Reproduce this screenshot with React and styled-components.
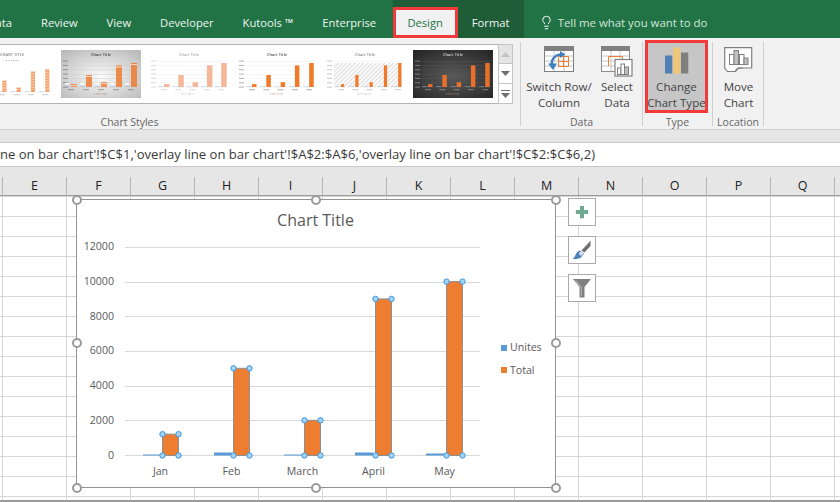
import React from "react";
import styled, { createGlobalStyle } from "styled-components";
import { Lightbulb } from "lucide-react";

const Global = createGlobalStyle`
  html, body { margin: 0; padding: 0; background: #fff; }
  body { font-family: "Open Sans", "Liberation Sans", sans-serif; }
`;

const FONT = `"Open Sans", "Liberation Sans", sans-serif`;

const Window = styled.div`
  width: 840px;
  height: 502px;
  display: flex;
  flex-direction: column;
  overflow: hidden;
  font-family: ${FONT};
`;

const TabBar = styled.div`
  height: 38px;
  flex: none;
  display: flex;
  background: #217346;
  color: #fff;
`;
const Tab = styled.div`
  padding: 7px 14.5px 0;
  display: flex;
  align-items: center;
  font-size: 11.2px;
  white-space: nowrap;
  color: #eef5f0;
  margin-left: ${(p) => p.$shift || 0}px;
`;
const ContextGroup = styled.div`
  margin-left: 2px;
  display: flex;
  padding-top: 7px;
  background: #1e5d38;
  width: 131px;
  flex: none;
  box-sizing: border-box;
`;
const ActiveTab = styled.div`
  width: 65px;
  box-sizing: border-box;
  border: 3px solid #f33a3a;
  background: #f1f1f1;
  color: #217346;
  font-size: 11.2px;
  display: flex;
  align-items: center;
  justify-content: center;
`;
const ContextTab = styled.div`
  flex: 1;
  display: flex;
  align-items: center;
  justify-content: center;
  font-size: 11.2px;
  color: #f2f7f4;
`;
const TellMe = styled.div`
  margin-left: 15px;
  padding-top: 7px;
  display: flex;
  align-items: center;
  gap: 4px;
  font-size: 11.4px;
  color: #d3e6da;
  white-space: nowrap;
`;

const Ribbon = styled.div`
  height: 92px;
  flex: none;
  box-sizing: border-box;
  display: flex;
  background: #f1f1f1;
  border-bottom: 1px solid #d2d2d2;
`;
const Group = styled.div`
  width: ${(p) => p.$w}px;
  flex: none;
  box-sizing: border-box;
  height: 84px;
  margin-top: 4px;
  border-right: 1px solid #cfcfcf;
  display: flex;
  flex-direction: column;
  position: relative;
`;
const GroupBody = styled.div`
  height: 70px;
  flex: none;
  display: flex;
  padding-left: ${(p) => p.$pad || 0}px;
`;
const GroupLabel = styled.div`
  font-size: 10.5px;
  line-height: 14px;
  height: 14px;
  margin-top: 3px;
  text-align: center;
  color: #666;
  padding-right: ${(p) => p.$pr || 0}px;
`;
const Gallery = styled.div`
  display: flex;
  height: 60px;
  margin-top: 2px;
  width: 512px;
`;
const GalleryPane = styled.div`
  width: 498px;
  box-sizing: border-box;
  flex: none;
  background: #fff;
  border-top: 1px solid #b4b4b4;
  border-bottom: 1px solid #b4b4b4;
  overflow: hidden;
  display: flex;
  align-items: center;
  gap: 8px;
`;
const ThumbSvg = styled.svg`
  width: 80px;
  height: 48px;
  flex: none;
  margin-left: ${(p) => p.$shift || 0}px;
  filter: blur(0.35px);
`;
const ScrollCol = styled.div`
  width: 15px;
  flex: none;
  display: flex;
  flex-direction: column;
`;
const ScrollBtn = styled.div`
  height: 20px;
  box-sizing: border-box;
  border: 1px solid #c4c4c4;
  border-top-width: ${(p) => (p.$first ? 1 : 0)}px;
  background: ${(p) => (p.$off ? "#e4e4e4" : "#fff")};
  display: flex;
  align-items: center;
  justify-content: center;
`;
const BigButton = styled.div`
  width: ${(p) => p.$w}px;
  flex: none;
  display: flex;
  flex-direction: column;
  align-items: center;
  font-size: 11.6px;
  line-height: 16px;
  color: #444;
  text-align: center;
  white-space: nowrap;
  box-sizing: border-box;
`;
const IconSlot = styled.div`
  flex: none;
  height: ${(p) => p.$h ?? 32}px;
  margin-top: ${(p) => p.$top ?? 4}px;
  margin-bottom: 1px;
  display: flex;
  align-items: flex-start;
  justify-content: center;
  margin-left: ${(p) => p.$shift || 0}px;
`;
const HotButton = styled.div`
  width: 63px;
  height: 73px;
  margin: -2px 0 0 2px;
  box-sizing: border-box;
  border: 3px solid #f33a3a;
  background: #c6c6c6;
  display: flex;
  flex-direction: column;
  align-items: center;
  font-size: 11.6px;
  line-height: 16px;
  color: #444;
  white-space: nowrap;
  overflow: hidden;
`;

const Band = styled.div`
  flex: none;
  height: ${(p) => p.$h}px;
  background: #e6e6e6;
  box-sizing: border-box;
`;
const FormulaBar = styled.div`
  flex: none;
  height: 25px;
  box-sizing: border-box;
  background: #fff;
  border-top: 1px solid #c9c9c9;
  border-bottom: 1px solid #c9c9c9;
  font-size: 13.07px;
  line-height: 22px;
  color: #3a3a3a;
  white-space: nowrap;
  overflow: hidden;
`;
const ColumnHeaders = styled.div`
  flex: none;
  height: 19px;
  box-sizing: border-box;
  background: #e6e6e6;
  border-bottom: 1px solid #9c9c9c;
  display: flex;
  overflow: hidden;
`;
const ColumnCell = styled.div`
  width: ${(p) => p.$w || 64}px;
  flex: none;
  box-sizing: border-box;
  border-right: 1px solid #b5b5b5;
  text-align: center;
  font-size: 12.5px;
  line-height: 18px;
  color: #222;
`;
const Sheet = styled.div`
  flex: 1;
  position: relative;
  overflow: hidden;
  background-color: #fff;
  background-image:
    linear-gradient(to right, #d6d6d6 1px, transparent 1px),
    linear-gradient(to bottom, #d6d6d6 1px, transparent 1px);
  background-size: 64px 20px;
  background-position: 2px 0;
`;
const BottomEdge = styled.div`
  flex: none;
  height: 2px;
  background: #9a9a9a;
`;
const ChartFrame = styled.div`
  position: absolute;
  left: 76px;
  top: 3px;
  width: 480px;
  height: 289px;
  box-sizing: border-box;
  border: 1px solid #939393;
  background: #fff;
`;
const ChartSvg = styled.svg`
  position: absolute;
  left: -1px;
  top: -1px;
  width: 480px;
  height: 289px;
`;
const Handle = styled.span`
  position: absolute;
  width: 10px;
  height: 10px;
  box-sizing: border-box;
  border-radius: 50%;
  background: #fff;
  border: 2px solid #9a9a9a;
  left: ${(p) => p.$x}px;
  top: ${(p) => p.$y}px;
  transform: translate(-50%, -50%);
`;
const SideButtons = styled.div`
  position: absolute;
  left: 568px;
  top: 2px;
  display: flex;
  flex-direction: column;
  gap: 10px;
`;
const SideButton = styled.div`
  width: 28px;
  height: 28px;
  box-sizing: border-box;
  border: 1px solid #aaa;
  background: #fff;
  display: flex;
  align-items: center;
  justify-content: center;
`;

const VALUES = [1200, 5000, 2000, 9000, 10000];
const MONTHS = ["Jan", "Feb", "March", "April", "May"];
const COLUMNS = "EFGHIJKLMNOPQ".split("");

function Thumb({ id, shift, bg, barW, x0 = 15, step = 14.3, color, opacity = 1, base = 37, top = 13, titleColor = "#777", title = "Chart Title", titleX = 40, titleAnchor = "middle", titleY = 6, grid = "#efefef", hatch, stripes, axis = true, band, gradBg }) {
  const h = base - top;
  return (
    <ThumbSvg $shift={shift} viewBox="0 0 80 48">
      <defs>
        {gradBg && (
          <radialGradient id={`g${id}`} cx="50%" cy="55%" r="70%">
            <stop offset="0%" stopColor={gradBg[0]} />
            <stop offset="100%" stopColor={gradBg[1]} />
          </radialGradient>
        )}
        {hatch && (
          <pattern id={`h${id}`} width="3" height="3" patternUnits="userSpaceOnUse" patternTransform="rotate(45)">
            <rect width="3" height="3" fill="#fff" />
            <rect width="1.2" height="3" fill="#dcdcdc" />
          </pattern>
        )}
      </defs>
      <rect width="80" height="48" fill={gradBg ? `url(#g${id})` : bg || "#fff"} />
      {hatch && <rect x="9" y={top} width="68" height={h} fill={`url(#h${id})`} />}
      {axis &&
        [0, 1, 2, 3, 4, 5, 6].map((i) => (
          <g key={i}>
            <rect x="9" y={top - 2 + (i * (h + 2)) / 6} width="68" height="0.5" fill={grid} />
            <rect x="2" y={top - 2.4 + (i * (h + 2)) / 6} width="5" height="1" fill={titleColor} opacity="0.45" />
          </g>
        ))}
      <text x={titleX} y={titleY} fontSize="4" fontWeight="600" textAnchor={titleAnchor} fill={titleColor} fontFamily={FONT}>
        {title}
      </text>
      {band && VALUES.map((_, i) => <rect key={i} x={x0 + i * step - 6} y={base - 4} width="4" height="1.5" fill="#fff" />)}
      {VALUES.map((v, i) => {
        const bh = (v / 10000) * h;
        const x = x0 + i * step;
        return (
          <g key={v}>
            <rect x={x} y={base - bh} width={barW} height={bh} fill={color} opacity={opacity} />
            {stripes &&
              Array.from({ length: Math.floor(bh / 1.6) }).map((_, k) => (
                <rect key={k} x={x} y={base - bh + k * 1.6} width={barW} height="0.5" fill="#fff" opacity="0.7" />
              ))}
            {band && <rect x={x} y={base - bh + 1.2} width={barW} height="0.8" fill="#fff" opacity="0.8" />}
            <rect x={x - 6} y={base - 0.6} width="5" height="0.5" fill="#9dbce0" />
            <rect x={x - 3} y={base + 2.2} width="6" height="1" fill={titleColor} opacity="0.45" />
          </g>
        );
      })}
      <rect x="33" y={stripes ? 10 : 43.5} width="1" height="1" fill="#7aa7d8" />
      <rect x="35" y={stripes ? 10 : 43.5} width="4" height="0.8" fill={titleColor} opacity="0.4" />
      <rect x="40" y={stripes ? 10 : 43.5} width="1" height="1" fill="#ed7d31" />
      <rect x="42" y={stripes ? 10 : 43.5} width="4" height="0.8" fill={titleColor} opacity="0.4" />
    </ThumbSvg>
  );
}

const SwitchIcon = () => (
  <svg width="30" height="26" viewBox="0 0 30 26">
    <rect x="0.5" y="0.5" width="29" height="25" fill="#fff" stroke="#808080" />
    <rect x="0" y="0" width="30" height="5" fill="#808080" />
    <path d="M10 5V25M20 5V25M1 10H29M1 15H29M1 20H29" stroke="#c8c8c8" fill="none" />
    <path d="M14.5 10.5H24.5V20.5H14.5ZM14.5 15.5H24.5M19.5 10.5V20.5" stroke="#ed7d31" fill="none" strokeWidth="1" />
    <path d="M9 22C5.5 15 10 9 17 8.5" stroke="#3f7fbf" strokeWidth="2.4" fill="none" />
    <path d="M16 5L21.5 8.5L16 12Z" fill="#3f7fbf" />
    <path d="M4 17.5L9 24L13 17.5Z" fill="#3f7fbf" />
  </svg>
);
const SelectIcon = () => (
  <svg width="32" height="31" viewBox="0 0 32 31">
    <rect x="0.5" y="0.5" width="28" height="25" fill="#fff" stroke="#8c8c8c" />
    <rect x="0" y="0" width="29" height="5" fill="#808080" />
    <path d="M10 5V25M19 5V25M1 10H28M1 15H28M1 20H28" stroke="#c8c8c8" fill="none" />
    <path d="M7.5 20V10.5H21.5V20" stroke="#ed7d31" fill="none" />
    <rect x="14" y="13.5" width="17" height="16.5" fill="#fff" stroke="#7f7f7f" strokeWidth="1.2" />
    <rect x="16.5" y="22" width="3.5" height="6.5" fill="#fff" stroke="#7f7f7f" />
    <rect x="20" y="18" width="3.5" height="10.5" fill="#fff" stroke="#7f7f7f" />
    <rect x="23.5" y="21" width="4" height="7.5" fill="#bfbfbf" stroke="#7f7f7f" />
  </svg>
);
const ChangeIcon = () => (
  <svg width="24" height="27" viewBox="0 0 24 27">
    <rect x="0" y="8.5" width="7.3" height="18" fill="#4f81b5" />
    <rect x="8" y="0.5" width="7.3" height="26" fill="#eec67a" />
    <rect x="16" y="5.5" width="7.3" height="21" fill="#7f7f7f" />
  </svg>
);
const MoveIcon = () => (
  <svg width="29" height="26" viewBox="0 0 29 26">
    <path d="M0.7 0.7H27.7V21H14.5L11.5 24.5H3.5L0.7 21Z" fill="#fff" stroke="#808080" strokeWidth="1.2" />
    <path d="M11 24L13.5 21H19" stroke="#808080" fill="none" />
    <rect x="5.5" y="7.5" width="4.5" height="10" fill="#fff" stroke="#808080" />
    <rect x="10" y="3.5" width="4.5" height="14" fill="#bfbfbf" stroke="#808080" />
    <rect x="15.5" y="7.5" width="4.5" height="10" fill="#fff" stroke="#808080" />
    <rect x="20" y="11" width="4" height="6.5" fill="#bfbfbf" stroke="#808080" />
  </svg>
);

const PlusIcon = () => (
  <svg width="14" height="14" viewBox="0 0 16 16">
    <path d="M5.7 1H10.3V5.7H15V10.3H10.3V15H5.7V10.3H1V5.7H5.7Z" fill="#6fab92" />
  </svg>
);
const BrushIcon = () => (
  <svg width="20" height="20" viewBox="0 0 20 20">
    <path d="M9.5 10.5L16 3.5L18.5 0.5V6L12.5 12.5Z" fill="#6f6f6f" />
    <path d="M8 10.5L12 13.5L9 17.5C6.5 19 3 19.3 0.5 19C2.5 17.5 3.5 15 4.5 13C5.5 11.5 6.8 10.8 8 10.5Z" fill="#4f81bd" />
    <circle cx="9" cy="13.5" r="2" fill="#fff" opacity="0.75" />
  </svg>
);
const FunnelIcon = () => (
  <svg width="20" height="20" viewBox="0 0 20 20">
    <path d="M1 1H19L12.5 9V19.5H7.5V9Z" fill="#7f7f7f" />
    <path d="M4 2.5L9.5 9V18H8.8V9L3 2.5Z" fill="#d8d8d8" />
  </svg>
);

function Chart() {
  const yOf = (v) => 455 - (v / 10000) * 173.4;
  const bars = [162.5, 233.5, 304.5, 375.5, 446.5];
  const blue = [
    [143, 1],
    [214, 3],
    [284, 1],
    [355, 3],
    [426, 2],
  ];
  return (
    <ChartSvg viewBox="76 199 480 289">
      <text x="315.5" y="225.5" fontSize="16" textAnchor="middle" fill="#595959" fontFamily={FONT}>
        Chart Title
      </text>
      {[0, 2000, 4000, 6000, 8000, 10000, 12000].map((v) => (
        <g key={v}>
          <rect x="125" y={Math.round(yOf(v))} width="355" height="1" fill="#d9d9d9" />
          <text x="114" y={yOf(v) + 3.5} fontSize="10.6" textAnchor="end" fill="#595959" fontFamily={FONT}>
            {v}
          </text>
        </g>
      ))}
      {VALUES.map((v, i) => {
        const x = bars[i];
        const t = yOf(v);
        const b = yOf(0) + 0.5;
        return (
          <g key={v}>
            <rect x={blue[i][0]} y={b - blue[i][1]} width="18" height={blue[i][1]} fill="#5b9bd5" />
            <rect x={x} y={t} width="16" height={b - t} fill="#ed7d31" stroke="#8f8f8f" strokeWidth="1" />
            {[
              [x, t],
              [x + 16, t],
              [x, b],
              [x + 16, b],
            ].map(([cx, cy]) => (
              <circle key={`${cx}-${cy}`} cx={cx} cy={cy} r="2.7" fill="#a3d2f5" stroke="#3b97e0" strokeWidth="1" />
            ))}
            <text x={x - 2} y="474.5" fontSize="10.6" textAnchor="middle" fill="#595959" fontFamily={FONT}>
              {MONTHS[i]}
            </text>
          </g>
        );
      })}
      <rect x="501" y="345" width="6" height="6" fill="#5b9bd5" />
      <text x="510" y="351" fontSize="10.6" fill="#595959" fontFamily={FONT}>
        Unites
      </text>
      <rect x="501" y="367" width="6" height="6" fill="#ed7d31" />
      <text x="510" y="374" fontSize="10.6" fill="#595959" fontFamily={FONT}>
        Total
      </text>
    </ChartSvg>
  );
}

const HANDLES = [
  [0, 0],
  [239, 0],
  [479, 0],
  [0, 143],
  [479, 143],
  [0, 288],
  [239, 288],
  [479, 288],
];

export default function App() {
  return (
    <Window>
      <Global />
      <TabBar>
        <Tab $shift={-27}>Data</Tab>
        <Tab>Review</Tab>
        <Tab>View</Tab>
        <Tab>Developer</Tab>
        <Tab>Kutools ™</Tab>
        <Tab>Enterprise</Tab>
        <ContextGroup>
          <ActiveTab>Design</ActiveTab>
          <ContextTab>Format</ContextTab>
        </ContextGroup>
        <TellMe>
          <Lightbulb size={15} strokeWidth={1.5} color="#fff" />
          Tell me what you want to do
        </TellMe>
      </TabBar>
      <Ribbon>
        <Group $w={521}>
          <GroupBody>
            <Gallery>
              <GalleryPane>
                <Thumb id="a" shift={-27} barW={4.2} color="#ed7d31" opacity={0.75} base={42} top={19} title="CHART TITLE" titleX={27} titleAnchor="start" stripes axis={false} titleColor="#888" />
                <Thumb id="b" barW={6} x0={10} step={15} color="#ed7d31" opacity={0.85} gradBg={["#fbfbfb", "#b9b9b9"]} titleColor="#444" grid="#cfcfcf" band />
                <Thumb id="c" barW={5.5} color="#f4b79a" titleColor="#aaa" />
                <Thumb id="d" barW={4.5} color="#f07a28" titleColor="#555" />
                <Thumb id="e" barW={3.2} x0={16} color="#f07a28" titleColor="#888" hatch />
                <Thumb id="f" barW={4.5} color="#e8702a" gradBg={["#5a5a5a", "#262626"]} titleColor="#d5d5d5" grid="#555" />
              </GalleryPane>
              <ScrollCol>
                <ScrollBtn $first $off>
                  <svg width="9" height="5" viewBox="0 0 9 5"><path d="M0 5L4.5 0L9 5Z" fill="#c4c4c4" /></svg>
                </ScrollBtn>
                <ScrollBtn>
                  <svg width="9" height="5" viewBox="0 0 9 5"><path d="M0 0H9L4.5 5Z" fill="#6f6f6f" /></svg>
                </ScrollBtn>
                <ScrollBtn>
                  <svg width="9" height="8" viewBox="0 0 9 8"><path d="M0 0H9V1H0ZM0 3H9L4.5 8Z" fill="#6f6f6f" /></svg>
                </ScrollBtn>
              </ScrollCol>
            </Gallery>
          </GroupBody>
          <GroupLabel $pr={261}>Chart Styles</GroupLabel>
        </Group>
        <Group $w={122}>
          <GroupBody $pad={5}>
            <BigButton $w={66}>
              <IconSlot $shift={-1}><SwitchIcon /></IconSlot>
              <span>Switch Row/</span>
              <span>Column</span>
            </BigButton>
            <BigButton $w={50}>
              <IconSlot><SelectIcon /></IconSlot>
              <span>Select</span>
              <span>Data</span>
            </BigButton>
          </GroupBody>
          <GroupLabel>Data</GroupLabel>
        </Group>
        <Group $w={70}>
          <GroupBody>
            <HotButton>
              <IconSlot $top={4} $h={31}><ChangeIcon /></IconSlot>
              <span>Change</span>
              <span>Chart Type</span>
            </HotButton>
          </GroupBody>
          <GroupLabel>Type</GroupLabel>
        </Group>
        <Group $w={51}>
          <GroupBody>
            <BigButton $w={51}>
              <IconSlot $top={5} $h={31}><MoveIcon /></IconSlot>
              <span>Move</span>
              <span>Chart</span>
            </BigButton>
          </GroupBody>
          <GroupLabel>Location</GroupLabel>
        </Group>
      </Ribbon>
      <Band $h={12} />
      <FormulaBar>ne on bar chart'!$C$1,'overlay line on bar chart'!$A$2:$A$6,'overlay line on bar chart'!$C$2:$C$6,2)</FormulaBar>
      <Band $h={10} />
      <ColumnHeaders>
        <ColumnCell $w={3} />
        {COLUMNS.map((c) => (
          <ColumnCell key={c}>{c}</ColumnCell>
        ))}
      </ColumnHeaders>
      <Sheet>
        <ChartFrame>
          <Chart />
          {HANDLES.map(([x, y]) => (
            <Handle key={`${x}-${y}`} $x={x - 0.5} $y={y - 0.5} />
          ))}
        </ChartFrame>
        <SideButtons>
          <SideButton><PlusIcon /></SideButton>
          <SideButton><BrushIcon /></SideButton>
          <SideButton><FunnelIcon /></SideButton>
        </SideButtons>
      </Sheet>
      <BottomEdge />
    </Window>
  );
}
